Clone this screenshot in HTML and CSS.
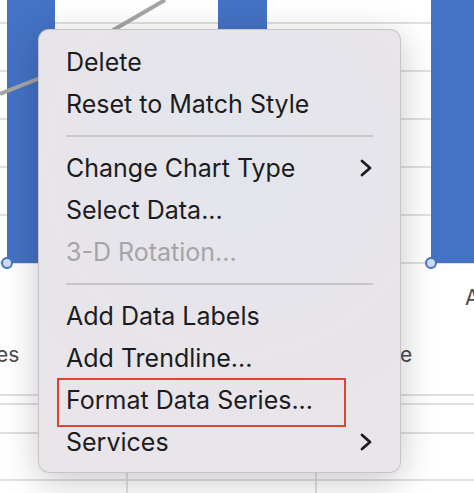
FILE: index.html
```html
<!DOCTYPE html>
<html lang="en">
<head>
    <meta charset="UTF-8">
    <title>Chart context menu</title>
    <link rel="stylesheet" href="styles.css">
</head>
<body>

<div class="stage">
    <!-- chart behind the menu -->
    <svg class="chart" width="474" height="493" viewBox="0 0 474 493">
        <g class="grid">
            <line x1="0" y1="23" x2="474" y2="23"/>
            <line x1="0" y1="71" x2="474" y2="71"/>
            <line x1="0" y1="119" x2="474" y2="119"/>
            <line x1="0" y1="167" x2="474" y2="167"/>
            <line x1="0" y1="215" x2="474" y2="215"/>
            <line x1="0" y1="263" x2="474" y2="263"/>
            <line x1="0" y1="395" x2="474" y2="395"/>
            <line x1="0" y1="404" x2="474" y2="404"/>
            <line x1="0" y1="433" x2="474" y2="433"/>
            <line x1="0" y1="480" x2="474" y2="480"/>
            <line x1="127" y1="470" x2="127" y2="493"/>
            <line x1="316" y1="470" x2="316" y2="493"/>
        </g>
        <g class="bars">
            <rect x="7" y="0" width="48" height="263"/>
            <rect x="218" y="0" width="49" height="263"/>
            <rect x="431" y="0" width="50" height="263"/>
        </g>
        <polyline class="trend" points="0,94 40,78 115,29 165,0"/>
        <circle class="handle" cx="7" cy="263" r="5"/>
        <circle class="handle" cx="431" cy="263" r="5"/>
        <text class="axis" x="-4" y="362">es</text>
        <text class="axis" x="400" y="362">e</text>
        <text class="axis" x="465" y="305">A</text>
    </svg>

    <div class="menu">
        <div class="item">Delete</div>
        <div class="item">Reset to Match Style</div>
        <div class="sep"></div>
        <div class="item">Change Chart Type
            <svg class="chev" width="12" height="18" viewBox="0 0 12 18"><path d="M2 2 L10 9 L2 16"/></svg>
        </div>
        <div class="item">Select Data...</div>
        <div class="item disabled">3-D Rotation...</div>
        <div class="sep"></div>
        <div class="item">Add Data Labels</div>
        <div class="item">Add Trendline...</div>
        <div class="item marked">Format Data Series...
            <span class="mark"></span>
        </div>
        <div class="item">Services
            <svg class="chev" width="12" height="18" viewBox="0 0 12 18"><path d="M2 2 L10 9 L2 16"/></svg>
        </div>
    </div>
</div>

</body>
</html>
```

FILE: styles.css
```css
body {
    margin: 0;
    background-color: #fff;
    font-family: Inter, "Liberation Sans", sans-serif;
    overflow: hidden;
}

.stage {
    position: relative;
    width: 474px;
    height: 493px;
}

.chart {
    display: block;
}

.grid line {
    stroke: #d6d6d6;
    stroke-width: 1.5;
}

.bars rect {
    fill: #4472c4;
}

.trend {
    fill: none;
    stroke: #a5a5a5;
    stroke-width: 4;
}

.handle {
    fill: #cddcf2;
    stroke: #4472c4;
    stroke-width: 2;
}

.axis {
    font-family: Inter, "Liberation Sans", sans-serif;
    font-size: 21px;
    fill: #4a4a4a;
}

.menu {
    position: absolute;
    left: 38px;
    top: 29px;
    width: 363px;
    height: 444px;
    box-sizing: border-box;
    padding: 11px 0;
    border-radius: 11px;
    border: 1px solid rgba(0, 0, 0, 0.14);
    background: radial-gradient(circle at 55% 30%, #e3e5ec 0%, #e8e5ea 60%, #e9e5e9 100%);
    box-shadow: 0 8px 36px rgba(0, 0, 0, 0.22);
}

.item {
    position: relative;
    height: 42px;
    display: flex;
    align-items: center;
    justify-content: space-between;
    padding: 0 28px 0 27px;
    font-size: 25px;
    color: #1c1c1e;
}

.item.disabled {
    color: #a6a4a8;
}

.sep {
    height: 22px;
    display: flex;
    align-items: center;
    padding: 0 27px;
}

.sep::after {
    content: "";
    flex: 1;
    height: 1.5px;
    background-color: #cac7cb;
}

.chev path {
    fill: none;
    stroke: #1c1c1e;
    stroke-width: 2.8;
    stroke-linecap: round;
    stroke-linejoin: round;
}

.mark {
    position: absolute;
    left: 18px;
    top: -1px;
    width: 289px;
    height: 49px;
    box-sizing: border-box;
    border: 2.5px solid #e0442e;
}
```
